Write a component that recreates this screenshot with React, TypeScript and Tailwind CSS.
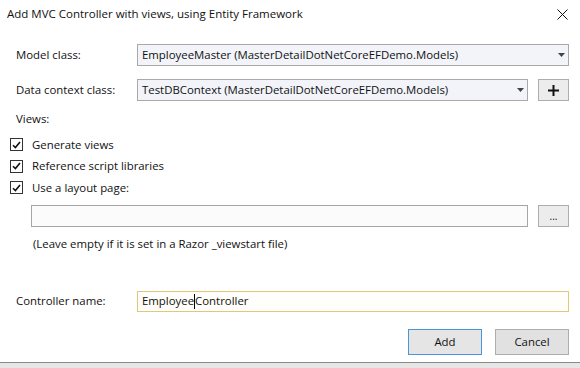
import React from "react";

function Arrow() {
  return (
    <svg width="7" height="4" viewBox="0 0 7 4" className="shrink-0">
      <path d="M0 0 L7 0 L3.5 4 Z" fill="#444" />
    </svg>
  );
}

function Check({ label }: { label: string }) {
  return (
    <div className="flex h-[21.5px] items-center">
      <div className="flex h-[13px] w-[13px] items-center justify-center border border-[#333] bg-white">
        <svg width="9" height="8" viewBox="0 0 9 8">
          <path d="M1 4.2 L3.4 6.6 L8 1" stroke="#111" strokeWidth="1.6" fill="none" />
        </svg>
      </div>
      <span className="ml-[9px]">{label}</span>
    </div>
  );
}

export default function App() {
  return (
    <div
      className="relative flex h-[368px] w-[580px] flex-col overflow-hidden bg-white text-[11.4px] leading-[16px] text-[#111]"
      style={{ fontFamily: '"Open Sans", "Noto Sans", sans-serif' }}
    >
      {/* title bar */}
      <div className="flex h-[28px] shrink-0 items-center justify-between pl-[7px] pr-[12px]">
        <span className="text-[11.5px]">Add MVC Controller with views, using Entity Framework</span>
        <svg width="11" height="11" viewBox="0 0 11 11">
          <path d="M0.5 0.5 L10.5 10.5 M10.5 0.5 L0.5 10.5" stroke="#111" strokeWidth="1" />
        </svg>
      </div>

      <div className="flex flex-col pr-[11px]">
        {/* model class */}
        <div className="mt-[16px] flex items-center">
          <span className="w-[137px] pl-[16px]">Model class:</span>
          <div className="flex h-[22px] flex-1 items-center justify-between border border-[#a9a9a9] bg-[#f2f4f9] pl-[4px] pr-[3px]">
            <span>EmployeeMaster (MasterDetailDotNetCoreEFDemo.Models)</span>
            <Arrow />
          </div>
        </div>

        {/* data context class */}
        <div className="mt-[13px] flex items-center">
          <span className="w-[137px] pl-[16px]">Data context class:</span>
          <div className="flex h-[22px] w-[391px] items-center justify-between border border-[#a9a9a9] bg-[#f2f4f9] pl-[4px] pr-[3px]">
            <span>TestDBContext (MasterDetailDotNetCoreEFDemo.Models)</span>
            <Arrow />
          </div>
          <div className="ml-auto flex h-[22px] w-[31px] items-center justify-center border border-[#adadad] bg-[#ececec]">
            <svg width="11" height="11" viewBox="0 0 11 11">
              <path d="M5.5 0 V11 M0 5.5 H11" stroke="#111" strokeWidth="2" />
            </svg>
          </div>
        </div>

        {/* views */}
        <div className="mt-[10px] pl-[16px]">Views:</div>
        <div className="mt-[7px] flex flex-col pl-[10px]">
          <Check label="Generate views" />
          <Check label="Reference script libraries" />
          <Check label="Use a layout page:" />
        </div>

        <div className="mt-[6px] flex items-center pl-[31px]">
          <div className="h-[22px] w-[497px] border border-[#a5a5a5] bg-[#fbfbfb]" />
          <div className="ml-auto flex h-[22px] w-[31px] items-center justify-center border border-[#adadad] bg-[#ececec] text-[10px] leading-[10px]">
            ...
          </div>
        </div>
        <div className="mt-[9px] pl-[33px]">(Leave empty if it is set in a Razor _viewstart file)</div>

        {/* controller name */}
        <div className="mt-[39px] flex items-center">
          <span className="w-[137px] pl-[16px]">Controller name:</span>
          <div className="flex h-[21px] flex-1 items-center border border-[#e2c67c] bg-[#fffefa] pl-[4px]">
            <span>Employee</span>
            <span className="h-[15px] w-px bg-black" />
            <span>Controller</span>
          </div>
        </div>

        {/* buttons */}
        <div className="mt-[17px] flex justify-end gap-[13px]">
          <div className="flex h-[26px] w-[74px] items-center justify-center border border-[#4a93dd] bg-[#e5e5e5]">
            Add
          </div>
          <div className="flex h-[26px] w-[74px] items-center justify-center border border-[#adadad] bg-[#e1e1e1]">
            Cancel
          </div>
        </div>
      </div>

      <div className="mt-auto h-[6px] shrink-0 border-t border-[#8a8a8a] bg-[#e6e6e6]" />
    </div>
  );
}
